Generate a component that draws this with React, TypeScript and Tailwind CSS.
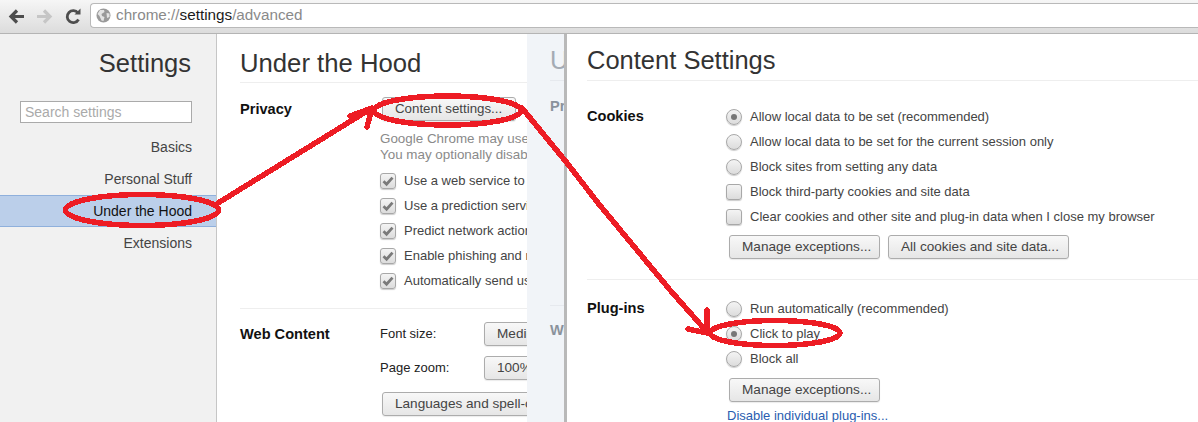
import React from "react";

const FONT = "[font-family:'Liberation_Sans',Arial,sans-serif]";

function Btn({ children, w, className = "" }: { children: React.ReactNode; w: string; className?: string }) {
  return (
    <div className={`h-[24px] ${w} shrink-0 rounded-[3px] border border-[#acacac] bg-gradient-to-b from-[#f8f8f8] to-[#e6e6e6] pl-[12px] text-[13.6px] leading-[22px] text-[#444] whitespace-nowrap overflow-hidden shadow-[0_1px_1px_rgba(0,0,0,0.08)] ${className}`}>
      {children}
    </div>
  );
}

function Check({ on, label }: { on?: boolean; label: string }) {
  return (
    <div className="h-[25px] flex items-center whitespace-nowrap text-[13px] text-[#444]">
      <div className="w-[16px] h-[16px] shrink-0 rounded-[3px] border border-[#a8a8a8] bg-gradient-to-b from-[#f4f4f4] to-[#dcdcdc] shadow-[0_1px_1px_rgba(0,0,0,0.2)] flex items-center justify-center mr-[8px]">
        {on && (
          <svg width="12" height="12" viewBox="0 0 12 12">
            <path d="M1.5 6.2 L4.6 9.2 L10.5 2.6" fill="none" stroke="#7a7a7a" strokeWidth="2.8" />
          </svg>
        )}
      </div>
      {label}
    </div>
  );
}

function Radio({ on, label }: { on?: boolean; label: string }) {
  return (
    <div className="h-[25px] flex items-center whitespace-nowrap text-[13px] text-[#444]">
      <div className="w-[16px] h-[16px] shrink-0 rounded-full border border-[#a8a8a8] bg-gradient-to-b from-[#f4f4f4] to-[#dcdcdc] shadow-[0_1px_1px_rgba(0,0,0,0.2)] flex items-center justify-center mr-[8px]">
        {on && <div className="w-[6px] h-[6px] rounded-full bg-[#777]" />}
      </div>
      {label}
    </div>
  );
}

function Toolbar() {
  return (
    <div className="h-[34px] shrink-0 flex items-start bg-gradient-to-b from-[#f6f6f6] to-[#dcdcdc] border-b border-[#b4b4b4]">
      <div className="w-[90px] h-[33px] flex items-center shrink-0">
        <svg width="90" height="33" viewBox="0 0 90 33">
          <path d="M11 16.5 H24 M17 10.5 L11 16.5 L17 22.5" fill="none" stroke="#4d4d4d" strokeWidth="3.2" />
          <path d="M37 16.5 H50 M44 10.5 L50 16.5 L44 22.5" fill="none" stroke="#c6c6c6" strokeWidth="3.2" />
          <path d="M78.5 19.5 A6 6 0 1 1 78 13" fill="none" stroke="#4d4d4d" strokeWidth="2.8" />
          <path d="M74.5 14.5 H80.5 V8.5 Z" fill="#4d4d4d" />
        </svg>
      </div>
      <div className="mt-[3px] h-[25px] flex-1 flex items-center rounded-l-[4px] border border-r-0 border-[#b9b9b9] bg-white pl-[5px] text-[15.25px] text-[#8a8a8a] whitespace-nowrap">
        <svg className="mr-[5px] shrink-0" width="15" height="15" viewBox="0 0 15 15">
          <circle cx="7.5" cy="7.5" r="7" fill="#9a9a9a" />
          <path d="M4 2 L8 2 L8.5 4 L5.5 6 L6 8 L8.5 9 L7.5 13 L5.5 12.5 L3.5 8 L1.5 6 Z M10.5 5 L13.5 5.5 L13.5 9 L11 10 Z" fill="#e4e4e4" />
        </svg>
        <span>chrome://</span>
        <span className="text-[#1a1a1a]">settings</span>
        <span>/advanced</span>
      </div>
    </div>
  );
}

function Sidebar() {
  return (
    <div className="w-[217px] shrink-0 bg-[#f1f1f1] border-r border-[#c6c6c6] text-[14px] text-[#444]">
      <div className="pr-[25px] pt-[12px] text-right text-[25.5px] leading-[34px] text-[#333]">Settings</div>
      <div className="ml-[20px] mt-[21px] h-[22px] w-[172px] border border-[#aaa] bg-white pl-[4px] text-[14px] leading-[20px] text-[#aaa]">Search settings</div>
      <div className="mt-[8px] text-right">
        <div className="h-[32px] pr-[24px] leading-[32px]">Basics</div>
        <div className="h-[32px] pr-[24px] leading-[32px]">Personal Stuff</div>
        <div className="h-[32px] pr-[24px] leading-[30px] bg-[#bbcfea] border-y border-[#8fb0dc] text-[#111]">Under the Hood</div>
        <div className="h-[32px] pr-[24px] leading-[32px]">Extensions</div>
      </div>
    </div>
  );
}

function Main() {
  return (
    <div className="w-[310px] shrink-0 overflow-hidden bg-white pl-[23px] text-[13px] text-[#444] whitespace-nowrap">
      <div className="w-[500px] mt-[12px] h-[37px] border-b border-[#eee] text-[25.7px] leading-[34px] text-[#333]">Under the Hood</div>
      <div className="flex mt-[14px]">
        <div className="w-[140px] shrink-0 pt-[2px] font-bold text-[14.6px] text-[#111] leading-[20px]">Privacy</div>
        <div className="w-[400px]">
          <Btn w="w-[134px]" className="ml-[2px]"><span className="text-[13.3px]">Content settings...</span></Btn>
          <div className="mt-[10px] leading-[16px] text-[13.4px] text-[#8a8a8a]">
            <div>Google Chrome may use web services to improve your browsing experience.</div>
            <div>You may optionally disable these services.</div>
          </div>
          <div className="mt-[5px]">
            <Check on label="Use a web service to help resolve navigation errors" />
            <Check on label="Use a prediction service to help complete searches" />
            <Check on label="Predict network actions to improve page load performance" />
            <Check on label="Enable phishing and malware protection" />
            <Check on label="Automatically send usage statistics and crash reports" />
          </div>
        </div>
      </div>
      <div className="w-[500px] mt-[15px] border-t border-[#eee]" />
      <div className="flex mt-[13px]">
        <div className="w-[140px] shrink-0 pt-[2px] font-bold text-[14.6px] text-[#111] leading-[20px]">Web Content</div>
        <div className="w-[400px]">
          <div className="flex items-center h-[24px] text-[#222]">
            <div className="w-[104px]">Font size:</div>
            <Btn w="w-[130px]">Medium</Btn>
          </div>
          <div className="flex items-center h-[24px] mt-[10px] text-[#222]">
            <div className="w-[104px]">Page zoom:</div>
            <Btn w="w-[130px]">100%</Btn>
          </div>
          <Btn w="w-[240px]" className="ml-[2px] mt-[12px]">Languages and spell-checker settings...</Btn>
        </div>
      </div>
    </div>
  );
}

function Backdrop() {
  return (
    <div className="w-[37px] shrink-0 overflow-hidden bg-[#f1f4f8] whitespace-nowrap text-[#8a929c]">
      <div className="ml-[23px] h-[47px] w-[300px] border-b border-[#e6e9ee] pt-[9px] text-[25.5px] leading-[34px] text-[#a4abb4]">Under</div>
      <div className="ml-[23px] mt-[13px] h-[24px] font-bold text-[14.6px] leading-[24px]">Privacy</div>
      <div className="ml-[23px] mt-[187px] border-t border-[#e6e9ee]" />
      <div className="ml-[23px] mt-[12px] font-bold text-[14.6px] leading-[24px]">Web Content</div>
    </div>
  );
}

function Dialog() {
  return (
    <div className="flex-1 min-w-0 bg-white border-l-[3px] border-[#b9b9b9] pl-[20px] text-[13px] text-[#444] whitespace-nowrap overflow-hidden">
      <div className="h-[47px] border-b border-[#eee] pt-[9px] text-[25.5px] leading-[34px] text-[#333]">Content Settings</div>
      <div className="flex pt-[23px] h-[199px] border-b border-[#eee]">
        <div className="w-[139px] shrink-0 h-[25px] leading-[25px] font-bold text-[14.6px] text-[#111]">Cookies</div>
        <div>
          <Radio on label="Allow local data to be set (recommended)" />
          <Radio label="Allow local data to be set for the current session only" />
          <Radio label="Block sites from setting any data" />
          <Check label="Block third-party cookies and site data" />
          <Check label="Clear cookies and other site and plug-in data when I close my browser" />
          <div className="flex gap-[8px] ml-[3px] mt-[6px]">
            <Btn w="w-[151px]">Manage exceptions...</Btn>
            <Btn w="w-[181px]">All cookies and site data...</Btn>
          </div>
        </div>
      </div>
      <div className="flex pt-[16px]">
        <div className="w-[139px] shrink-0 h-[25px] leading-[25px] font-bold text-[14.6px] text-[#111]">Plug-ins</div>
        <div>
          <Radio label="Run automatically (recommended)" />
          <Radio on label="Click to play" />
          <Radio label="Block all" />
          <Btn w="w-[151px]" className="ml-[3px] mt-[7px]">Manage exceptions...</Btn>
          <div className="ml-[1px] mt-[5px] leading-[18px] text-[13px] text-[#2a5db0]">Disable individual plug-ins...</div>
        </div>
      </div>
    </div>
  );
}

function Annotations() {
  return (
    <svg className="absolute left-0 top-0 pointer-events-none" width="1198" height="422" viewBox="0 0 1198 422" shapeRendering="crispEdges">
      <g fill="none" stroke="#ed1c24" strokeWidth="5.5" strokeLinecap="round" strokeLinejoin="round">
        <ellipse cx="142" cy="210" rx="76.5" ry="15.5" />
        <path d="M218 203 L372 108 M350 116 L372 108 L367 127" />
        <ellipse cx="447.5" cy="110.5" rx="73.5" ry="14.5" />
        <path d="M522 108 L567 163 L598 203 L670 290 L708 333 M707 310 L707 333 L688 329" />
        <ellipse cx="775" cy="333" rx="65" ry="12.5" />
      </g>
    </svg>
  );
}

export default function App() {
  return (
    <div className={`relative w-[1198px] h-[422px] overflow-hidden flex flex-col bg-white ${FONT}`}>
      <Toolbar />
      <div className="flex flex-1 min-h-0">
        <Sidebar />
        <Main />
        <Backdrop />
        <Dialog />
      </div>
      <Annotations />
    </div>
  );
}
